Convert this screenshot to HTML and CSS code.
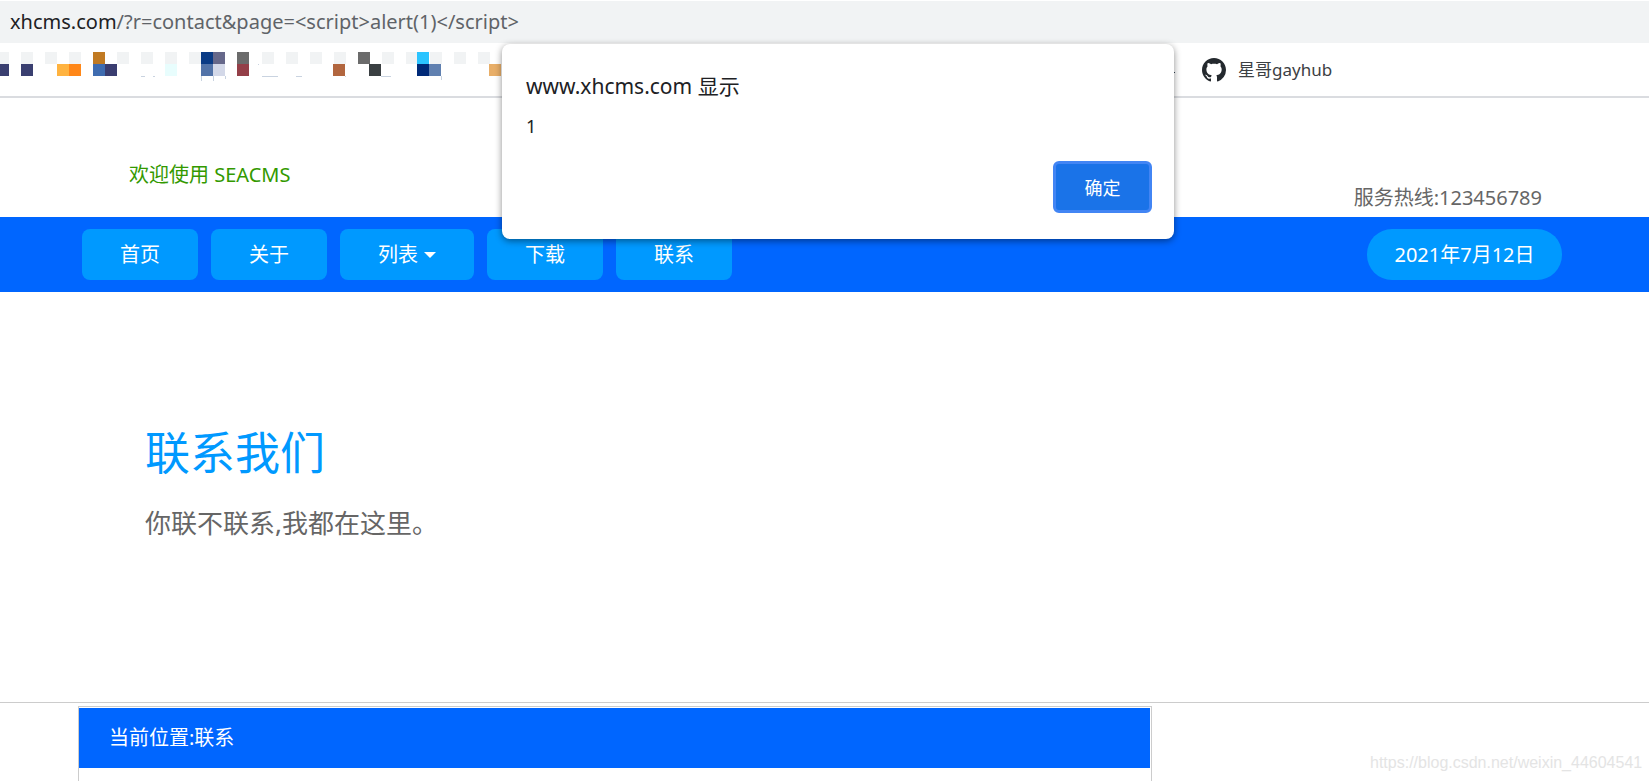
FILE: index.html
```html
<!DOCTYPE html>
<html lang="zh-CN">
<head>
<meta charset="utf-8">
<title>联系我们</title>
<link rel="stylesheet" href="styles.css">
</head>
<body>
<div class="chrome">
  <div class="urlbar"><span class="domain">xhcms.com</span>/?r=contact&amp;page=&lt;script&gt;alert(1)&lt;/script&gt;</div>
  <div class="bookmarks">
    <svg class="mosaic" width="502" height="30" viewBox="0 0 502 30" aria-hidden="true">
      <g fill="#f1f3f4">
        <rect x="0" y="0" width="9" height="12"/><rect x="21" y="0" width="12" height="12"/><rect x="45" y="0" width="12" height="12"/><rect x="69" y="0" width="12" height="12"/><rect x="117" y="0" width="12" height="12"/><rect x="141" y="0" width="12" height="12"/><rect x="165" y="0" width="12" height="12"/><rect x="189" y="0" width="12" height="12"/><rect x="262" y="0" width="12" height="12"/><rect x="286" y="0" width="12" height="12"/><rect x="310" y="0" width="12" height="12"/><rect x="334" y="0" width="12" height="12"/><rect x="382" y="0" width="12" height="12"/><rect x="406" y="0" width="12" height="12"/><rect x="430" y="0" width="12" height="12"/><rect x="454" y="0" width="12" height="12"/><rect x="478" y="0" width="12" height="12"/>
      </g>
      <rect x="93" y="0" width="12" height="12" fill="#c17a22"/>
      <rect x="201" y="0" width="12" height="12" fill="#0a3b85"/>
      <rect x="213" y="0" width="12" height="12" fill="#66688a"/>
      <rect x="237" y="0" width="12" height="12" fill="#6b6b6b"/>
      <rect x="358" y="0" width="12" height="12" fill="#6b6b6b"/>
      <rect x="417" y="0" width="12" height="12" fill="#2bc4ff"/>
      <rect x="0" y="12" width="9" height="12" fill="#3a3f70"/>
      <rect x="21" y="12" width="12" height="12" fill="#3a3f70"/>
      <rect x="57" y="12" width="12" height="12" fill="#ffb340"/>
      <rect x="69" y="12" width="12" height="12" fill="#ff8718"/>
      <rect x="93" y="12" width="12" height="12" fill="#3f6cb0"/>
      <rect x="105" y="12" width="12" height="12" fill="#3a3d70"/>
      <rect x="165" y="12" width="12" height="12" fill="#e8fdfd"/>
      <rect x="201" y="12" width="12" height="12" fill="#5273a8"/>
      <rect x="213" y="12" width="12" height="12" fill="#d3d8e8"/>
      <rect x="237" y="12" width="12" height="12" fill="#943f48"/>
      <rect x="333" y="12" width="12" height="12" fill="#b2663f"/>
      <rect x="369" y="12" width="12" height="12" fill="#3a3f42"/>
      <rect x="417" y="12" width="12" height="12" fill="#002a78"/>
      <rect x="429" y="12" width="12" height="12" fill="#6080b0"/>
      <rect x="489" y="12" width="12" height="12" fill="#e8ae68"/>
      <g fill="#c9d3e0">
        <rect x="201" y="24" width="1" height="5"/><rect x="213" y="24" width="1" height="5"/><rect x="225" y="24" width="1" height="3"/><rect x="153" y="24" width="2" height="1"/><rect x="141" y="24" width="4" height="1"/><rect x="258" y="12" width="1" height="1"/><rect x="262" y="24" width="16" height="1"/><rect x="296" y="24" width="6" height="1"/><rect x="345" y="24" width="1" height="1"/><rect x="381" y="24" width="10" height="1"/><rect x="441" y="24" width="1" height="4"/>
      </g>
    </svg>
    <span class="speck"></span>
    <a class="bookmark">
      <svg class="gh" viewBox="0 0 16 16" width="24" height="24" aria-hidden="true"><path fill="#24292e" d="M8 0C3.58 0 0 3.58 0 8c0 3.54 2.29 6.53 5.47 7.59.4.07.55-.17.55-.38 0-.19-.01-.82-.01-1.49-2.01.37-2.53-.49-2.69-.94-.09-.23-.48-.94-.82-1.13-.28-.15-.68-.52-.01-.53.63-.01 1.08.58 1.23.82.72 1.21 1.87.87 2.33.66.07-.52.28-.87.51-1.07-1.78-.2-3.64-.89-3.64-3.95 0-.87.31-1.59.82-2.15-.08-.2-.36-1.02.08-2.12 0 0 .67-.21 2.2.82.64-.18 1.32-.27 2-.27s1.36.09 2 .27c1.53-1.04 2.2-.82 2.2-.82.44 1.1.16 1.92.08 2.12.51.56.82 1.27.82 2.15 0 3.07-1.87 3.75-3.65 3.95.29.25.54.73.54 1.48 0 1.07-.01 1.93-.01 2.2 0 .21.15.46.55.38A8.01 8.01 0 0 0 16 8c0-4.42-3.58-8-8-8z"/></svg>
      <span>星哥gayhub</span>
    </a>
  </div>
</div>

<header class="site-head">
  <div class="welcome">欢迎使用 SEACMS</div>
  <div class="hotline">服务热线:123456789</div>
</header>

<nav class="nav">
  <a class="nav-item">首页</a>
  <a class="nav-item">关于</a>
  <a class="nav-item">列表<span class="caret"></span></a>
  <a class="nav-item">下载</a>
  <a class="nav-item">联系</a>
  <div class="date">2021年7月12日</div>
</nav>

<section class="hero">
  <h1 class="hero-title">联系我们</h1>
  <p class="hero-sub">你联不联系,我都在这里。</p>
</section>

<section class="panel">
  <div class="panel-head">当前位置:联系</div>
</section>

<div class="dialog" role="alertdialog">
  <div class="dialog-title">www.xhcms.com 显示</div>
  <div class="dialog-msg">1</div>
  <div class="dialog-actions"><button class="dialog-btn">确定</button></div>
</div>

<div class="watermark">https://blog.csdn.net/weixin_44604541</div>
</body>
</html>
```
FILE: styles.css
```css
* { box-sizing: border-box; }
html, body { margin: 0; padding: 0; height: 781px; overflow: hidden; background: #fff; }
body { font-family: "Noto Sans", "Noto Sans CJK SC", sans-serif; position: relative; }

.chrome { height: 98px; }
.urlbar {
  margin-top: 1px;
  height: 42px;
  padding-left: 10px;
  background: #f1f3f4;
  color: #5f6368;
  font-size: 20px;
  line-height: 42px;
  white-space: nowrap;
}
.domain { color: #202124; }
.bookmarks {
  height: 55px;
  border-bottom: 2px solid #dadce0;
  display: flex;
  align-items: flex-start;
}
.mosaic { margin-top: 9px; flex: none; }
.speck { width: 2px; height: 1px; margin: 29px 0 0 671px; background: #345; flex: none; }
.bookmark { display: flex; align-items: center; margin: 15px 0 0 27px; color: #3c4043; font-size: 17px; line-height: 24px; }
.gh { margin-right: 12px; flex: none; }

.site-head {
  height: 118px;
  display: flex;
  justify-content: space-between;
  padding: 0 107px 0 129px;
}
.welcome { color: #390; font-size: 20px; line-height: 30px; margin-top: 61px; }
.hotline { color: #666; font-size: 20px; line-height: 30px; margin-top: 84px; }

.nav {
  height: 75px;
  background: #06f;
  display: flex;
  align-items: center;
  gap: 13px;
  padding: 0 87px 0 82px;
}
.nav-item {
  height: 51px;
  padding: 0 38px;
  border-radius: 8px;
  background: #09f;
  color: #fff;
  font-size: 20px;
  line-height: 51px;
  display: flex;
  align-items: center;
}
.caret {
  width: 0;
  height: 0;
  margin-left: 6px;
  border-left: 6px solid transparent;
  border-right: 6px solid transparent;
  border-top: 6px solid #fff;
}
.date {
  margin-left: auto;
  height: 51px;
  width: 195px;
  border-radius: 25px;
  background: #09f;
  color: #fff;
  font-size: 20px;
  line-height: 51px;
  text-align: center;
}

.hero {
  height: 411px;
  padding: 131px 0 0 145px;
  border-bottom: 1px solid #ccc;
}
.hero-title { margin: 0; color: #09f; font-size: 45px; font-weight: 400; line-height: 60px; }
.hero-sub { margin: 22px 0 0; color: #666; font-size: 26px; line-height: 36px; }

.panel {
  width: 1074px;
  height: 90px;
  margin: 3px 0 0 78px;
  padding: 1px 1px 0 0;
  border: 1px solid #ccc;
}
.panel-head {
  height: 60px;
  padding-left: 30px;
  background: #06f;
  color: #fff;
  font-size: 20px;
  line-height: 60px;
}

.dialog {
  position: absolute;
  left: 502px;
  top: 44px;
  width: 672px;
  height: 195px;
  padding: 26px 22px 0 24px;
  background: #fff;
  border-radius: 8px;
  box-shadow: 0 2px 7px rgba(0, 0, 0, .45);
  color: #202124;
}
.dialog-title { font-size: 21px; line-height: 32px; }
.dialog-msg { font-size: 18px; line-height: 26px; margin-top: 11px; }
.dialog-actions { display: flex; justify-content: flex-end; margin-top: 22px; }
.dialog-btn {
  width: 99px;
  height: 52px;
  border: 3px solid #4285f4;
  border-radius: 6px;
  background: #1a73e8;
  color: #fff;
  font-family: inherit;
  font-size: 18px;
  padding: 0;
}

.watermark {
  position: absolute;
  left: 1370px;
  top: 753px;
  color: #e4e4e4;
  font-family: "Liberation Sans", sans-serif;
  font-size: 16px;
  line-height: 20px;
  white-space: nowrap;
}
```
